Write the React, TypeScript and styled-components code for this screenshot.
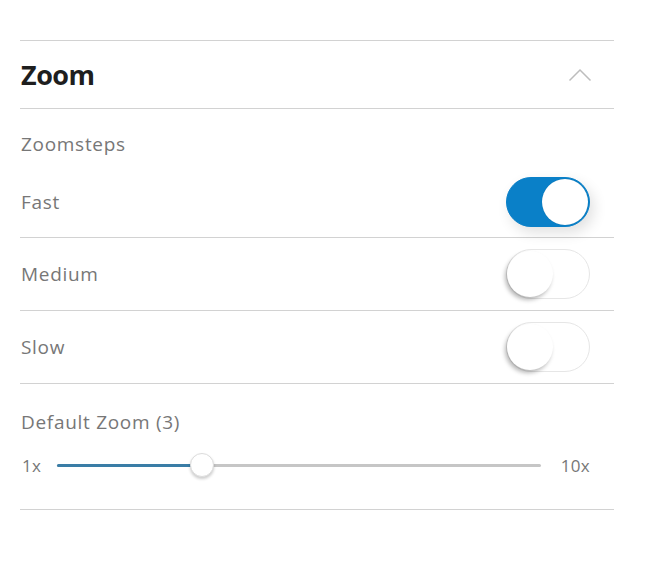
import React, { useState } from "react";
import styled, { createGlobalStyle } from "styled-components";

const GlobalStyle = createGlobalStyle`
  body {
    margin: 0;
    background: #fff;
    font-family: "Open Sans", "Noto Sans", sans-serif;
  }
`;

type Step = "fast" | "medium" | "slow";

const steps: { id: Step; label: string }[] = [
  { id: "fast", label: "Fast" },
  { id: "medium", label: "Medium" },
  { id: "slow", label: "Slow" },
];

const App = () => {
  const [step, setStep] = useState<Step>("fast");
  const [zoom] = useState(3);
  const [open, setOpen] = useState(true);

  return (
    <>
      <GlobalStyle />
      <Panel>
        <Header onClick={() => setOpen(!open)}>
          <Title>Zoom</Title>
          <Chevron width="24" height="14" viewBox="0 0 24 14">
            <polyline points="1.5,12.5 12,2 22.5,12.5" />
          </Chevron>
        </Header>
        {open && (
          <>
            <Group>
              <Caption>Zoomsteps</Caption>
              <Rows>
                {steps.map(s => (
                  <Row key={s.id}>
                    <Label>{s.label}</Label>
                    <Toggle $on={step === s.id} onClick={() => setStep(s.id)}>
                      <Knob $on={step === s.id} />
                    </Toggle>
                  </Row>
                ))}
              </Rows>
            </Group>
            <SliderGroup>
              <Caption>Default Zoom ({zoom})</Caption>
              <SliderRow>
                <Small>1x</Small>
                <Track>
                  <Fill style={{ width: `${zoom * 10}%` }} />
                  <Thumb style={{ left: `${zoom * 10}%` }} />
                </Track>
                <Small>10x</Small>
              </SliderRow>
            </SliderGroup>
          </>
        )}
      </Panel>
    </>
  );
};

export default App;

const Panel = styled.div`
  width: 594px;
  margin: 40px 0 0 20px;
  border-top: 1px solid #d2d2d2;
`;

const Header = styled.div`
  height: 67px;
  display: flex;
  align-items: center;
  justify-content: space-between;
  padding: 0 22px 0 1px;
  border-bottom: 1px solid #d2d2d2;
  cursor: pointer;
`;

const Title = styled.h2`
  margin: 0;
  font-size: 27px;
  font-weight: 700;
  color: #1e1e1e;
  letter-spacing: -0.5px;
`;

const Chevron = styled.svg`
  fill: none;
  stroke: #bdbdbd;
  stroke-width: 1.5;
`;

const Group = styled.div`
  padding-top: 23px;
`;

const Caption = styled.div`
  font-size: 19px;
  line-height: 24px;
  color: #777;
  letter-spacing: 0.7px;
  padding-left: 1px;
`;

const Rows = styled.div`
  margin-top: 11px;
`;

const Row = styled.div`
  height: 72px;
  display: flex;
  align-items: center;
  justify-content: space-between;
  padding: 0 24px 0 1px;
  border-bottom: 1px solid #d2d2d2;

  &:first-child {
    height: 70px;
  }
`;

const Label = styled.span`
  font-size: 19px;
  color: #777;
  letter-spacing: 0.7px;
`;

const Toggle = styled.button<{ $on: boolean }>`
  position: relative;
  width: 84px;
  height: 50px;
  padding: 0;
  border-radius: 25px;
  border: 1px solid ${({ $on }) => ($on ? "#0a80c8" : "#e6e6e6")};
  background: ${({ $on }) => ($on ? "#0a80c8" : "#fff")};
  box-shadow: ${({ $on }) => ($on ? "4px 6px 14px rgba(0,0,0,0.12)" : "none")};
  cursor: pointer;
`;

const Knob = styled.span<{ $on: boolean }>`
  position: absolute;
  top: 1px;
  left: ${({ $on }) => ($on ? "35px" : "0px")};
  width: 46px;
  height: 46px;
  border-radius: 50%;
  background: #fff;
  box-shadow: ${({ $on }) =>
    $on ? "0 0 1px rgba(0,0,0,0.2)" : "-2px 3px 4px rgba(0,0,0,0.28)"};
`;

const SliderGroup = styled.div`
  padding: 26px 0 32px;
  border-bottom: 1px solid #d2d2d2;
`;

const SliderRow = styled.div`
  display: flex;
  align-items: center;
  margin-top: 19px;
  height: 24px;
  padding: 0 24px 0 2px;
`;

const Small = styled.span`
  font-size: 17px;
  color: #777;
  letter-spacing: 0.3px;
`;

const Track = styled.div`
  position: relative;
  flex: 1;
  height: 3px;
  margin: 0 20px 0 16px;
  background: #c6c6c6;
  border-radius: 2px;
`;

const Fill = styled.div`
  height: 100%;
  background: #3a7da6;
  border-radius: 2px;
`;

const Thumb = styled.span`
  position: absolute;
  top: 50%;
  width: 24px;
  height: 24px;
  border-radius: 50%;
  background: #fff;
  border: 1px solid #dcdcdc;
  box-sizing: border-box;
  box-shadow: 0 2px 3px rgba(0, 0, 0, 0.2);
  transform: translate(-50%, -50%);
`;
